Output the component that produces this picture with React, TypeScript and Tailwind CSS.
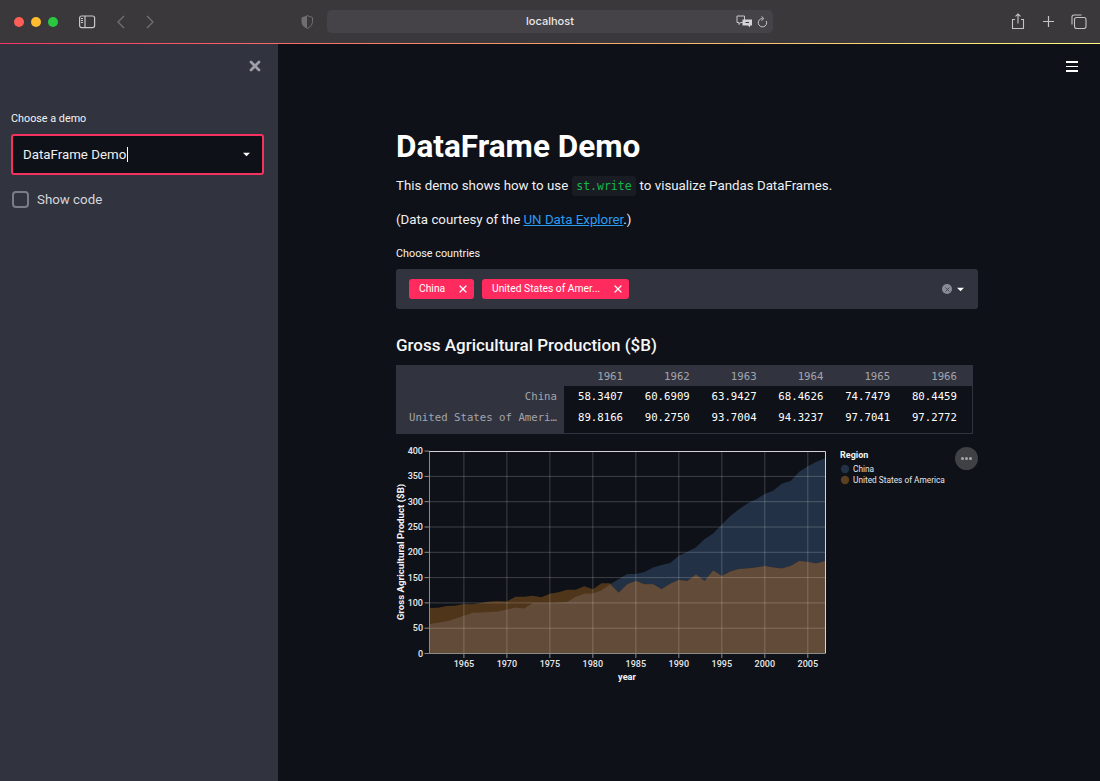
import React from "react";
import { X } from "lucide-react";

const sans = "font-['Roboto','Noto_Sans',sans-serif]";
const mono = "font-['DejaVu_Sans_Mono','Liberation_Mono',monospace]";

const years = ["1961", "1962", "1963", "1964", "1965", "1966"];
const tableRows = [
  { name: "China", values: ["58.3407", "60.6909", "63.9427", "68.4626", "74.7479", "80.4459"] },
  { name: "United States of Ameri…", values: ["89.8166", "90.2750", "93.7004", "94.3237", "97.7041", "97.2772"] },
];

// values read off the chart, 1961 to 2007
const china = [
  58.3, 60.7, 63.9, 68.5, 74.7, 80.4, 81, 82, 83, 87, 91, 89, 100, 100, 100, 101, 102, 112, 118, 118.5, 125, 137, 147,
  157, 157, 161, 170, 175, 179, 193, 201, 210, 226, 237, 255, 272, 285, 297, 305, 315, 322, 336, 341, 359, 370, 379, 386,
];
const usa = [
  89.8, 90.3, 93.7, 94.3, 97.7, 97.3, 100, 103, 104, 103, 112, 112, 114, 111, 118, 121, 126, 126, 133, 127, 139, 139, 120,
  137, 143, 137, 137, 127, 138, 145, 143, 156, 143, 164, 153, 162, 167, 168, 170, 173, 170, 168, 173, 183, 181, 178, 183,
];

const px = (i: number) => 429.5 + (i * 395.5) / 46;
const py = (v: number) => 653.5 - v * 0.506;
const area = (vals: number[]) =>
  `M${px(0)} ${py(0)} ` + vals.map((v, i) => `L${px(i).toFixed(1)} ${py(v).toFixed(1)}`).join(" ") + ` L${px(46)} ${py(0)} Z`;
const overlap = china.map((v, i) => Math.min(v, usa[i]));

function Chart() {
  const gridYears = [1965, 1970, 1975, 1980, 1985, 1990, 1995, 2000, 2005];
  const gridVals = [50, 100, 150, 200, 250, 300, 350];
  return (
    <svg width="582" height="250" viewBox="396 440 582 250" className="block" fontFamily="Roboto, 'Noto Sans', sans-serif">
      <path d={area(china)} fill="#223145" />
      <path d={area(usa)} fill="#4f3519" />
      <path d={area(overlap)} fill="#624b38" />
      {gridYears.map((y) => {
        const x = px(y - 1961);
        return (
          <g key={y}>
            <line x1={x} x2={x} y1={451} y2={653.5} stroke="#ffffff" strokeOpacity="0.2" />
            <line x1={x} x2={x} y1={653.5} y2={658} stroke="#8a8a8a" />
            <text x={x} y={667} fontSize="9" fontWeight="500" fill="#e8e8ea" textAnchor="middle">
              {y}
            </text>
          </g>
        );
      })}
      {gridVals.map((v) => (
        <line key={v} x1={429.5} x2={825} y1={py(v)} y2={py(v)} stroke="#ffffff" strokeOpacity="0.2" />
      ))}
      {[0, 50, 100, 150, 200, 250, 300, 350, 400].map((v) => (
        <g key={v}>
          <line x1={424.5} x2={429.5} y1={py(v)} y2={py(v)} stroke="#8a8a8a" />
          <text x={423} y={py(v) + 3} fontSize="9" fontWeight="500" fill="#e8e8ea" textAnchor="end">
            {v}
          </text>
        </g>
      ))}
      <line x1={429.5} x2={429.5} y1={451} y2={653.5} stroke="#8a8a8a" />
      <line x1={429.5} x2={825} y1={653.5} y2={653.5} stroke="#8a8a8a" />
      <path d="M429.5 451.5H825.5V653.5" fill="none" stroke="#d4d4d6" />
      <text transform="translate(404 552) rotate(-90)" fontSize="9.7" fontWeight="700" fill="#f4f4f5" textAnchor="middle">
        Gross Agricultural Product ($B)
      </text>
      <text x={627} y={680} fontSize="9.2" fontWeight="700" fill="#f4f4f5" textAnchor="middle">
        year
      </text>
      <text x={840} y={458} fontSize="9" fontWeight="700" fill="#f4f4f5">
        Region
      </text>
      <circle cx={845} cy={469} r={4.2} fill="#223145" />
      <text x={853} y={472} fontSize="8.3" fill="#e8e8ea">
        China
      </text>
      <circle cx={845} cy={480} r={4.2} fill="#5a3f21" />
      <text x={853} y={483} fontSize="8.3" fill="#e8e8ea">
        United States of America
      </text>
    </svg>
  );
}

function BrowserBar() {
  return (
    <div className="h-[43px] bg-[#3a383b] flex items-center shrink-0">
      <div className="flex gap-[7px] pl-[14px]">
        <div className="w-[10px] h-[10px] rounded-full bg-[#ff5f57]" />
        <div className="w-[10px] h-[10px] rounded-full bg-[#febc2e]" />
        <div className="w-[10px] h-[10px] rounded-full bg-[#28c840]" />
      </div>
      <svg width="18" height="14" viewBox="0 0 18 14" className="ml-[20px]" fill="none" stroke="#c8c7c9" strokeWidth="1.2">
        <rect x="1.600" y="1" width="15" height="11.600" rx="2" />
        <line x1="7" y1="1" x2="7" y2="12.600" />
        <path d="M3 3.500h2M3 5.500h2M3 7.500h2" />
      </svg>
      <svg width="10" height="14" viewBox="0 0 10 14" className="ml-[20px]" fill="none" stroke="#717073" strokeWidth="1.3">
        <path d="M8 1L2 7l6 6" />
      </svg>
      <svg width="10" height="14" viewBox="0 0 10 14" className="ml-[19px]" fill="none" stroke="#717073" strokeWidth="1.3">
        <path d="M2 1l6 6-6 6" />
      </svg>
      <svg width="12" height="14" viewBox="0 0 12 14" className="ml-[146px]">
        <path d="M6 .5L.5 2.500v4C.5 10 3 12.400 6 13.500V.5z" fill="#6f6e71" />
        <path d="M6 .5l5.500 2v4c0 3.500-2.500 5.900-5.500 7" fill="none" stroke="#6f6e71" />
      </svg>
      <div className="ml-[14px] w-[446px] h-[23px] rounded-[5px] bg-[#454347] flex items-center relative">
        <span className="font-['Inter',sans-serif] w-full text-center text-[11px] font-medium text-[#e8e7e9]">localhost</span>
        <svg width="17" height="13" viewBox="0 0 17 13" className="absolute left-[409px] top-[5px]" fill="none" stroke="#c8c7c9" strokeWidth="1">
          <path d="M1 1h7.500v6.500H4.500L3 9.500v-2H1z" />
          <path d="M6.500 4.500h9.500v6h-2v2l-2-2H6.500z" fill="#d4d3d5" stroke="none" />
          <path d="M9.500 7.500h3.500" stroke="#3a383b" />
        </svg>
        <svg width="11" height="12" viewBox="0 0 11 12" className="absolute left-[430px] top-[6px]" fill="none" stroke="#c8c7c9" strokeWidth="1">
          <path d="M5.500 2.500A4.200 4.200 0 1 0 9.300 5" />
          <path d="M4.500 .3L6.800 2.500 4.500 4.700" />
        </svg>
      </div>
      <svg width="14" height="17" viewBox="0 0 14 17" className="ml-[238px]" fill="none" stroke="#c4c3c5" strokeWidth="1.1">
        <path d="M4 6.500H1.500v9h11v-9H10" />
        <path d="M7 10.500V1M4.500 3.300L7 1l2.500 2.300" />
      </svg>
      <svg width="13" height="13" viewBox="0 0 13 13" className="ml-[17px]" stroke="#c4c3c5" strokeWidth="1.2">
        <path d="M6.500 1v11M1 6.500h11" />
      </svg>
      <svg width="16" height="15" viewBox="0 0 16 15" className="ml-[16px]" fill="none" stroke="#c4c3c5" strokeWidth="1.1">
        <path d="M1 10.500V3a2 2 0 0 1 2-2h7.500" />
        <rect x="3.500" y="3.500" width="11.500" height="11" rx="2" />
      </svg>
    </div>
  );
}

function Caret() {
  return (
    <svg width="7" height="5" viewBox="0 0 8 5">
      <path d="M0 .5h8L4 4.500z" fill="#ffffff" />
    </svg>
  );
}

function Chip({ label, width }: { label: string; width: string }) {
  return (
    <div className={`${width} h-[20px] rounded-[3px] bg-[#ff2b5e] flex items-center justify-between pl-[10px] pr-[5px]`}>
      <span className="text-[10.300px] text-white">{label}</span>
      <X size={12} color="#ffffff" strokeWidth={2.4} />
    </div>
  );
}

function Sidebar() {
  return (
    <div className="w-[278px] shrink-0 bg-[#31333f] px-[11px] flex flex-col">
      <div className="flex justify-end pt-[14px] pr-[4px]">
        <X size={16} color="#9d9ea6" strokeWidth={4} />
      </div>
      <p className="mt-[38px] text-[10.800px] leading-[14px] text-[#f4f4f5]">Choose a demo</p>
      <div className="mt-[8px] w-[253px] h-[41px] rounded-[3px] border-2 border-[#f4315f] bg-[#0e1117] flex items-center justify-between pl-[10px] pr-[12px]">
        <div className="flex items-center">
          <span className="text-[13.300px] text-[#f0f0f2]">DataFrame Demo</span>
          <div className="w-px h-[15px] bg-white ml-px" />
        </div>
        <Caret />
      </div>
      <div className="mt-[15px] flex items-center pl-px">
        <div className="w-[17px] h-[17px] rounded-[4px] border-2 border-[#7a7c86]" />
        <span className="ml-[8px] text-[13.300px] text-[#d6d6da]">Show code</span>
      </div>
    </div>
  );
}

function Main() {
  return (
    <div className="flex-1 bg-[#0e1117] relative pl-[118px]">
      <div className="absolute right-[22px] top-[17px] w-[12px] flex flex-col gap-[3px]">
        <div className="h-[1.500px] bg-white" />
        <div className="h-[1.500px] bg-white" />
        <div className="h-[1.500px] bg-white" />
      </div>
      <div className="w-[582px] flex flex-col pt-[84px]">
        <h1 className="text-[31.500px] leading-[38px] font-bold text-white">DataFrame Demo</h1>
        <p className="mt-[9px] text-[13.300px] leading-[22px] text-[#f0f0f2] flex items-center">
          This demo shows how to use
          <code className={`${mono} mx-[4px] px-[4px] h-[20px] leading-[20px] rounded-[3px] bg-[#1a1c24] text-[#12b84a] text-[11.500px]`}>st.write</code>
          to visualize Pandas DataFrames.
        </p>
        <p className="mt-[12px] text-[13.300px] leading-[22px] text-[#f0f0f2]">
          (Data courtesy of the <a className="text-[#2b9cf2] underline">UN Data Explorer</a>.)
        </p>
        <p className="mt-[16px] text-[10.800px] leading-[14px] text-[#f4f4f5]">Choose countries</p>
        <div className="mt-[8px] h-[40px] rounded-[3px] bg-[#31333f] flex items-center pl-[13px] pr-[14px]">
          <div className="flex gap-[8px]">
            <Chip label="China" width="w-[65px]" />
            <Chip label="United States of Amer..." width="w-[147px]" />
          </div>
          <div className="ml-auto flex items-center gap-[5px]">
            <div className="w-[10px] h-[10px] rounded-full bg-[#8a8c96] flex items-center justify-center">
              <X size={7} color="#31333f" strokeWidth={2.5} />
            </div>
            <Caret />
          </div>
        </div>
        <h2 className="mt-[24px] text-[17px] leading-[24px] font-medium text-[#f6f6f7]">Gross Agricultural Production ($B)</h2>
        <div className={`${mono} mt-[8px] w-[577px] border border-[#31333f] text-[10.700px] leading-[21px]`}>
          <div className="grid grid-cols-[167px_74px_repeat(5,66.800px)] bg-[#31333f] text-[#a3a5ad] h-[20px]">
            <div />
            {years.map((y) => (
              <div key={y} className="text-right pr-[15px]">
                {y}
              </div>
            ))}
          </div>
          <div className="grid grid-cols-[167px_74px_repeat(5,66.800px)] pb-[5px]">
            {tableRows.map((r) => (
              <React.Fragment key={r.name}>
                <div className="bg-[#31333f] text-[#a3a5ad] text-right pr-[7px]">{r.name}</div>
                {r.values.map((v) => (
                  <div key={v} className="text-right pr-[15px] text-white">
                    {v}
                  </div>
                ))}
              </React.Fragment>
            ))}
            <div className="bg-[#31333f] -mb-[5px] h-[5px]" />
          </div>
        </div>
        <div className="relative mt-[6px]">
          <Chart />
          <div className="absolute right-0 top-[7px] w-[23px] h-[23px] rounded-full bg-[#3f4145] flex items-center justify-center gap-[1.500px]">
            <div className="w-[2.500px] h-[2.500px] rounded-full bg-[#a8a8ac]" />
            <div className="w-[2.500px] h-[2.500px] rounded-full bg-[#a8a8ac]" />
            <div className="w-[2.500px] h-[2.500px] rounded-full bg-[#a8a8ac]" />
          </div>
        </div>
      </div>
    </div>
  );
}

export default function App() {
  return (
    <div className={`${sans} w-[1100px] h-[781px] flex flex-col overflow-hidden`}>
      <BrowserBar />
      <div className="h-px bg-[linear-gradient(90deg,#f63366,#f5a06a,#fffd80)]" />
      <div className="flex flex-1">
        <Sidebar />
        <Main />
      </div>
    </div>
  );
}
